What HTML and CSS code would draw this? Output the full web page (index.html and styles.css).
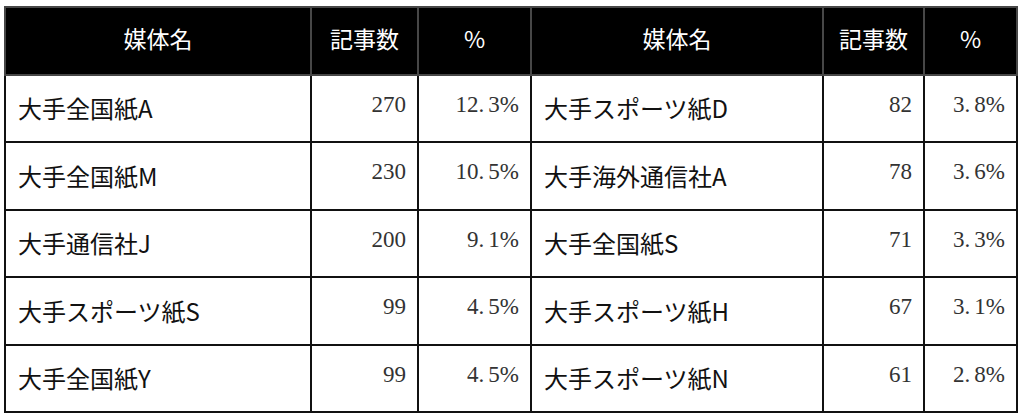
FILE: index.html
```html
<!DOCTYPE html>
<html lang="ja">
<head>
<meta charset="utf-8">
<link rel="stylesheet" href="styles.css">
</head>
<body>
<table class="media-table">
  <colgroup>
    <col class="c-name1">
    <col class="c-count1">
    <col class="c-pct1">
    <col class="c-name2">
    <col class="c-count2">
    <col class="c-pct2">
  </colgroup>
  <thead>
    <tr>
      <th>媒体名</th><th>記事数</th><th>%</th>
      <th>媒体名</th><th>記事数</th><th>%</th>
    </tr>
  </thead>
  <tbody>
    <tr>
      <td class="name">大手全国紙A</td><td class="num">270</td><td class="num">12<span class="dot">.</span>3%</td>
      <td class="name">大手スポーツ紙D</td><td class="num">82</td><td class="num">3<span class="dot">.</span>8%</td>
    </tr>
    <tr>
      <td class="name">大手全国紙M</td><td class="num">230</td><td class="num">10<span class="dot">.</span>5%</td>
      <td class="name">大手海外通信社A</td><td class="num">78</td><td class="num">3<span class="dot">.</span>6%</td>
    </tr>
    <tr>
      <td class="name">大手通信社J</td><td class="num">200</td><td class="num">9<span class="dot">.</span>1%</td>
      <td class="name">大手全国紙S</td><td class="num">71</td><td class="num">3<span class="dot">.</span>3%</td>
    </tr>
    <tr>
      <td class="name">大手スポーツ紙S</td><td class="num">99</td><td class="num">4<span class="dot">.</span>5%</td>
      <td class="name">大手スポーツ紙H</td><td class="num">67</td><td class="num">3<span class="dot">.</span>1%</td>
    </tr>
    <tr>
      <td class="name">大手全国紙Y</td><td class="num">99</td><td class="num">4<span class="dot">.</span>5%</td>
      <td class="name">大手スポーツ紙N</td><td class="num">61</td><td class="num">2<span class="dot">.</span>8%</td>
    </tr>
  </tbody>
</table>
</body>
</html>
```

FILE: styles.css
```css
html, body {
  margin: 0;
  padding: 0;
  background: #ffffff;
}

.media-table {
  margin: 6px 0 0 4px;
  width: 1014px;
  table-layout: fixed;
  border-collapse: collapse;
  font-family: "Noto Sans CJK JP", "Noto Sans", sans-serif;
  color: #111;
}

.c-name1 { width: 306px; }
.c-count1 { width: 107px; }
.c-pct1 { width: 113px; }
.c-name2 { width: 292px; }
.c-count2 { width: 101px; }
.c-pct2 { width: 93px; }

.media-table tr {
  height: 67.5px;
}

.media-table th {
  background: #000;
  color: #fff;
  font-weight: 400;
  font-size: 23px;
  text-align: center;
  border: 2px solid #474747;
  padding: 0 0 4px;
  line-height: 1;
}

.media-table td {
  border: 2px solid #111;
  padding: 0;
  line-height: 1;
}

.media-table td.name {
  font-size: 24px;
  padding-left: 12px;
  text-align: left;
  white-space: nowrap;
}

.media-table td.num {
  font-family: "Liberation Serif", "DejaVu Serif", serif;
  font-size: 23px;
  color: #333;
  text-align: right;
  padding-right: 11px;
  padding-bottom: 8px;
}

.dot {
  padding-right: 4px;
}
```
